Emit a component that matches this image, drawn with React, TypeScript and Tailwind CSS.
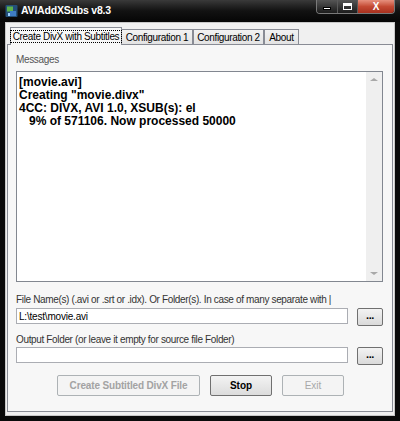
import React from 'react';

const ui = { fontFamily: '"Liberation Sans", Arial, sans-serif' };

const Tab: React.FC<{ label: string; w: string; active?: boolean; first?: boolean }> = ({ label, w, active, first }) => {
  if (active)
    return (
      <div className={`relative z-10 -mb-px flex h-[18px] items-start justify-center border border-b-0 border-[#898c95] bg-[#f7f7f7] pt-[2px] ${w}`}>
        <span className="whitespace-nowrap border border-dotted border-black px-[2px] leading-[11px]">{label}</span>
      </div>
    );
  return (
    <div
      className={`flex h-[15px] items-start justify-center whitespace-nowrap border border-b-0 ${first ? 'border-l-0' : ''} border-[#898c95] bg-gradient-to-b from-[#f2f2f2] to-[#e3e3e3] pt-[2px] leading-[11px] ${w}`}
    >
      {label}
    </div>
  );
};

const DotsButton = () => (
  <button className="flex h-[18px] w-[26px] items-center justify-center rounded-[2px] border border-[#707070] bg-gradient-to-b from-[#f3f3f3] to-[#dadada] pb-[3px] text-[11px] font-bold leading-none text-black">
    ...
  </button>
);

export default function App() {
  return (
    <div className="h-[421px] w-[400px] overflow-hidden bg-[#0a0a0a] text-[10px] tracking-[-0.35px] text-black" style={ui}>
      {/* title bar */}
      <div className="relative flex h-[22px] items-center bg-gradient-to-b from-[#3a3a3a] via-[#121212] to-[#060606] pl-[5px]">
        <svg width="13" height="14" viewBox="0 0 13 14" className="mr-[3px]">
          <rect x="0.5" y="1" width="12" height="12" rx="1" fill="#24507a" />
          <rect x="2" y="2.5" width="6" height="5" fill="#5db24c" />
          <rect x="5" y="7" width="6" height="5" fill="#3f7dc4" />
          <rect x="3" y="9" width="2" height="3" fill="#9bd0ff" />
        </svg>
        <span className="text-[10.5px] font-bold tracking-[-0.2px] text-white">AVIAddXSubs v8.3</span>
        <div className="absolute right-[5px] top-0 flex h-[14px] overflow-hidden rounded-b-[4px] border border-t-0 border-[#7a7a7a]">
          <div className="flex w-[21px] items-end justify-center border-r border-[#5a5a5a] bg-gradient-to-b from-[#555] to-[#1c1c1c] pb-[3px]">
            <div className="h-[3px] w-[8px] border border-black bg-white" />
          </div>
          <div className="flex w-[20px] items-center justify-center border-r border-[#5a5a5a] bg-gradient-to-b from-[#555] to-[#1c1c1c]">
            <div className="h-[7px] w-[9px] border-[1.5px] border-t-[3px] border-white" />
          </div>
          <div className="flex w-[36px] items-center justify-center bg-gradient-to-b from-[#e6907e] via-[#c44a34] to-[#a8301e]">
            <span className="text-[10px] font-bold leading-none text-white">X</span>
          </div>
        </div>
      </div>

      {/* client */}
      <div className="mx-[5px] h-[394px] border border-[#c8c8c8] bg-[#f0f0f0] px-[1px] pt-[4px]">
        <div className="flex items-end pl-[3px]">
          <Tab label="Create DivX with Subtitles" w="w-[112px]" active />
          <Tab label="Configuration 1" w="w-[71px]" first />
          <Tab label="Configuration 2" w="w-[71px]" />
          <Tab label="About" w="w-[35px]" />
        </div>
        <div className="h-[368px] border border-[#898c95] bg-[#f7f7f7] pl-[8px] pr-[9px] pt-[9px]">
          <div className="leading-[12px] text-[#555]">Messages</div>
          <div className="mt-[5px] flex h-[211px] border border-[#828790] bg-white">
            <div className="flex-1 pl-[2px] pt-[4px] text-[12px] font-bold leading-[13px] tracking-normal">
              <div>[movie.avi]</div>
              <div>Creating "movie.divx"</div>
              <div>4CC: DIVX, AVI 1.0, XSUB(s): el</div>
              <div className="whitespace-pre">{'   9% of 571106. Now processed 50000'}</div>
            </div>
            <div className="flex w-[16px] flex-col items-center justify-between bg-[#efefef] pb-[6px] pt-[6px]">
              <div className="h-0 w-0 border-x-[4px] border-b-[3px] border-x-transparent border-b-[#a8a8a8]" />
              <div className="h-0 w-0 border-x-[4px] border-t-[3px] border-x-transparent border-t-[#a8a8a8]" />
            </div>
          </div>

          <div className="mt-[12px] whitespace-nowrap leading-[12px] text-[#333]">
            File Name(s) (.avi or .srt or .idx). Or Folder(s). In case of many separate with |
          </div>
          <div className="mt-[2px] flex items-start gap-[9px]">
            <div className="flex h-[16px] w-[332px] items-center border border-[#abadb3] bg-white pl-[2px] tracking-[-0.2px]">
              L:\test\movie.avi
            </div>
            <DotsButton />
          </div>

          <div className="mt-[8px] whitespace-nowrap leading-[12px] text-[#333]">
            Output Folder (or leave it empty for source file Folder)
          </div>
          <div className="mt-[1px] flex items-start gap-[9px]">
            <div className="h-[16px] w-[332px] border border-[#abadb3] bg-white" />
            <DotsButton />
          </div>

          <div className="mt-[10px] flex gap-[10px] pl-[41px]">
            <button className="h-[21px] w-[143px] rounded-[2px] border border-[#adb2b5] bg-[#f4f4f4] font-bold tracking-[-0.15px] text-[#a3a3a3]">
              Create Subtitled DivX File
            </button>
            <button className="h-[21px] w-[62px] rounded-[2px] border border-[#707070] bg-gradient-to-b from-[#f3f3f3] to-[#dcdcdc] font-bold tracking-normal text-black">
              Stop
            </button>
            <button className="h-[21px] w-[62px] rounded-[2px] border border-[#adb2b5] bg-[#f4f4f4] tracking-normal text-[#a8a8a8]">
              Exit
            </button>
          </div>
        </div>
      </div>
    </div>
  );
}
